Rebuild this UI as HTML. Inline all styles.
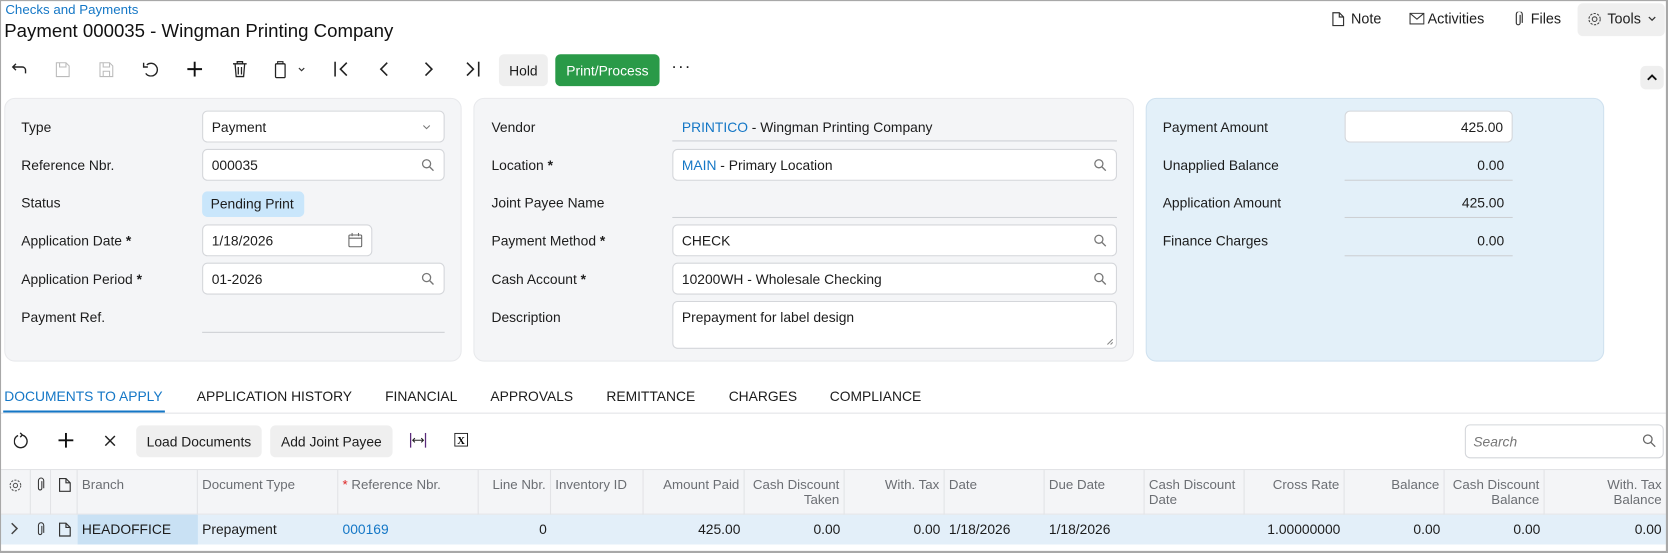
<!DOCTYPE html>
<html><head><meta charset="utf-8"><style>
*{box-sizing:border-box;margin:0;padding:0}
html,body{width:1668px;height:553px;overflow:hidden;background:#fff}
#w{position:absolute;left:0;top:0;width:1568px;height:520px;transform:scale(1.06378,1.06346);transform-origin:0 0;font-family:"Liberation Sans",Arial,sans-serif;font-size:13px;color:#1c1c1c}
.frame{position:absolute;left:0;top:0;width:1568px;height:520px;border:1px solid #a8a8a8;border-right:2px solid #a8a8a8;border-bottom:2px solid #a8a8a8;pointer-events:none}
.a{position:absolute;white-space:nowrap}
.panel{position:absolute;background:#f4f5f7;border:1px solid #e8e9ec;border-radius:10px}
.inp{position:absolute;background:#fff;border:1px solid #d4d6da;border-radius:5px;height:30px;padding:7px 8px}
.ul{position:absolute;border-bottom:1px solid #cdd0d4;height:1px}
.lbl{position:absolute;white-space:nowrap}
.btn{position:absolute;background:#efefef;border-radius:5px;height:30px;padding:8px 9px;font-size:13px}
.blue{color:#1477c6}
svg{position:absolute}
.th{position:absolute;top:441px;height:43px;border-right:1px solid #e2e3e6;color:#6b6e73;padding:8px 4px;line-height:14px;font-size:12.5px;white-space:normal}
.td{position:absolute;top:484px;height:28px;padding:6px 4px;font-size:13px}
.r{text-align:right}
</style></head><body><div id="w">
<div class="a blue" style="left:5px;top:2px;font-size:12.5px">Checks and Payments</div>
<div class="a" style="left:4px;top:19px;font-size:17.5px;color:#111">Payment 000035 - Wingman Printing Company</div>

<svg style="left:1252px;top:11px" width="12" height="14" viewBox="0 0 12 14"><path d="M1 1h6l4 4v8H1z M7 1v4h4" fill="none" stroke="#333" stroke-width="1.1"/></svg>
<div class="a" style="left:1270px;top:10px;font-size:13.5px">Note</div>
<svg style="left:1325px;top:12px" width="14" height="11" viewBox="0 0 14 11"><rect x="0.5" y="0.5" width="13" height="10" fill="none" stroke="#333"/><path d="M.5 .5l6.5 5.5 6.5-5.5" fill="none" stroke="#333"/></svg>
<div class="a" style="left:1342px;top:10px;font-size:13.5px">Activities</div>
<svg style="left:1423px;top:11px" width="9" height="14" viewBox="0 0 9 14"><path d="M6 3v7.5a1.8 1.8 0 01-3.6 0V2.5a2.8 2.8 0 015.6 0v8" fill="none" stroke="#333" stroke-width="1.1"/></svg>
<div class="a" style="left:1439px;top:10px;font-size:13.5px">Files</div>
<div class="a" style="left:1483px;top:3px;width:82px;height:31px;background:#efefef;border-radius:5px"></div>
<svg style="left:1492px;top:11px" width="14" height="14" viewBox="0 0 14 14"><circle cx="7" cy="7" r="2.2" fill="none" stroke="#444"/><circle cx="7" cy="7" r="5.3" fill="none" stroke="#444" stroke-dasharray="2.2 1.2"/></svg>
<div class="a" style="left:1511px;top:10px;font-size:13.5px">Tools</div>
<svg style="left:1549px;top:15px" width="8" height="6"><path d="M1 1l3 3 3-3" fill="none" stroke="#333" stroke-width="1.2"/></svg>
<div class="a" style="left:1542px;top:62px;width:22px;height:22px;background:#efefef;border-radius:5px"></div>
<svg style="left:1548px;top:69px" width="10" height="7"><path d="M1 6l4-4 4 4" fill="none" stroke="#111" stroke-width="1.8"/></svg>

<svg style="left:10px;top:58px" width="16" height="14" viewBox="0 0 16 14"><path d="M14 11V8a3 3 0 00-3-3H2M5 2L2 5l3 3" fill="none" stroke="#222" stroke-width="1.3"/></svg>
<svg style="left:52px;top:58px" width="14" height="15" viewBox="0 0 14 15"><path d="M1 1h9l3 3v10H1z" fill="none" stroke="#bbb"/><path d="M4 1v4h6V1" fill="none" stroke="#bbb"/></svg>
<svg style="left:93px;top:58px" width="14" height="15" viewBox="0 0 14 15"><path d="M1 1h9l3 3v10H1z" fill="none" stroke="#bbb"/><path d="M4 1v4h6V1M4 14V9h6v5" fill="none" stroke="#bbb"/></svg>
<svg style="left:134px;top:58px" width="16" height="14" viewBox="0 0 16 14"><path d="M4 3a6 6 0 11-1 8M1 1v4h4" fill="none" stroke="#222" stroke-width="1.3"/></svg>
<svg style="left:176px;top:58px" width="14" height="14"><path d="M7 0v14M0 7h14" stroke="#111" stroke-width="1.8"/></svg>
<svg style="left:219px;top:57px" width="13" height="16" viewBox="0 0 13 16"><path d="M0 3h13M4 3V1h5v2M2 3l1 12h7l1-12M5 6v7M8 6v7" fill="none" stroke="#222" stroke-width="1.2"/></svg>
<svg style="left:257px;top:57px" width="30" height="17" viewBox="0 0 30 17"><rect x="2" y="3" width="9" height="13" rx="1" fill="none" stroke="#222" stroke-width="1.2"/><path d="M4 3V1h5v2" fill="none" stroke="#222"/><path d="M24 7l2.5 2.5 2.5-2.5" fill="none" stroke="#333" stroke-width="1.1"/></svg>
<svg style="left:314px;top:58px" width="13" height="14"><path d="M1 0v14M12 1L6 7l6 6" fill="none" stroke="#222" stroke-width="1.5"/></svg>
<svg style="left:356px;top:58px" width="10" height="14"><path d="M8 1L2 7l6 6" fill="none" stroke="#222" stroke-width="1.5"/></svg>
<svg style="left:398px;top:58px" width="10" height="14"><path d="M2 1l6 6-6 6" fill="none" stroke="#222" stroke-width="1.5"/></svg>
<svg style="left:438px;top:58px" width="13" height="14"><path d="M12 0v14M1 1l6 6-6 6" fill="none" stroke="#222" stroke-width="1.5"/></svg>
<div class="btn" style="left:469px;top:51px;width:46px;text-align:center">Hold</div>
<div class="btn" style="left:522px;top:51px;width:98px;background:#2a9a48;color:#fff;text-align:center">Print/Process</div>
<div class="a" style="left:631px;top:54px;font-size:16px;letter-spacing:1px">···</div>

<div class="panel" style="left:4px;top:92px;width:430px;height:248px"></div>
<div class="lbl" style="left:20px;top:112px">Type</div>
<div class="inp" style="left:190px;top:104px;width:228px">Payment</div>
<svg style="left:397px;top:117px" width="8" height="5"><path d="M1 1l3 3 3-3" fill="none" stroke="#777"/></svg>
<div class="lbl" style="left:20px;top:148px">Reference Nbr.</div>
<div class="inp" style="left:190px;top:140px;width:228px">000035</div>
<div class="lbl" style="left:20px;top:183px">Status</div>
<div class="a" style="left:190px;top:180px;width:96px;height:24px;background:#c9e6fb;border-radius:5px;padding:4px 8px">Pending Print</div>
<div class="lbl" style="left:20px;top:219px">Application Date <b>*</b></div>
<div class="inp" style="left:190px;top:211px;width:160px">1/18/2026</div>
<svg style="left:327px;top:219px" width="14" height="14" viewBox="0 0 14 14"><rect x="1" y="2" width="12" height="11" rx="1" fill="none" stroke="#666"/><path d="M1 5h12M4 0v3M10 0v3" stroke="#666"/></svg>
<div class="lbl" style="left:20px;top:255px">Application Period <b>*</b></div>
<div class="inp" style="left:190px;top:247px;width:228px">01-2026</div>
<div class="lbl" style="left:20px;top:291px">Payment Ref.</div>
<div class="ul" style="left:190px;top:312px;width:228px"></div>

<div class="panel" style="left:445px;top:92px;width:621px;height:248px"></div>
<div class="lbl" style="left:462px;top:112px">Vendor</div>
<div class="lbl" style="left:641px;top:112px"><span class="blue">PRINTICO</span> - Wingman Printing Company</div>
<div class="ul" style="left:632px;top:132px;width:418px"></div>
<div class="lbl" style="left:462px;top:148px">Location <b>*</b></div>
<div class="inp" style="left:632px;top:140px;width:418px"><span class="blue">MAIN</span> - Primary Location</div>
<div class="lbl" style="left:462px;top:183px">Joint Payee Name</div>
<div class="ul" style="left:632px;top:204px;width:418px"></div>
<div class="lbl" style="left:462px;top:219px">Payment Method <b>*</b></div>
<div class="inp" style="left:632px;top:211px;width:418px">CHECK</div>
<div class="lbl" style="left:462px;top:255px">Cash Account <b>*</b></div>
<div class="inp" style="left:632px;top:247px;width:418px">10200WH - Wholesale Checking</div>
<div class="lbl" style="left:462px;top:291px">Description</div>
<div class="inp" style="left:632px;top:283px;width:418px;height:45px">Prepayment for label design</div>

<div class="panel" style="left:1077px;top:92px;width:431px;height:248px;background:#e3f0f9;border-color:#cfe1ef"></div>
<div class="lbl" style="left:1093px;top:112px">Payment Amount</div>
<div class="inp r" style="left:1264px;top:104px;width:158px">425.00</div>
<div class="lbl" style="left:1093px;top:148px">Unapplied Balance</div>
<div class="lbl" style="left:1264px;top:148px;width:150px;text-align:right">0.00</div>
<div class="ul" style="left:1264px;top:169px;width:158px"></div>
<div class="lbl" style="left:1093px;top:183px">Application Amount</div>
<div class="lbl" style="left:1264px;top:183px;width:150px;text-align:right">425.00</div>
<div class="ul" style="left:1264px;top:204px;width:158px"></div>
<div class="lbl" style="left:1093px;top:219px">Finance Charges</div>
<div class="lbl" style="left:1264px;top:219px;width:150px;text-align:right">0.00</div>
<div class="ul" style="left:1264px;top:240px;width:158px"></div>

<div class="a blue" style="left:4px;top:365px">DOCUMENTS TO APPLY</div>
<div class="a" style="left:3px;top:386px;width:152px;height:2px;background:#1477c6"></div>
<div class="a" style="left:185px;top:365px">APPLICATION HISTORY</div>
<div class="a" style="left:362px;top:365px">FINANCIAL</div>
<div class="a" style="left:461px;top:365px">APPROVALS</div>
<div class="a" style="left:570px;top:365px">REMITTANCE</div>
<div class="a" style="left:685px;top:365px">CHARGES</div>
<div class="a" style="left:780px;top:365px">COMPLIANCE</div>
<div class="a" style="left:0;top:388px;width:1566px;height:1px;background:#e2e3e6"></div>

<svg style="left:13px;top:406px" width="14" height="16" viewBox="0 0 14 16"><path d="M4 3.5A6 6 0 107 3h1M6 1l2 2-2 2" fill="none" stroke="#222" stroke-width="1.3"/></svg>
<svg style="left:55px;top:407px" width="14" height="14"><path d="M7 0v14M0 7h14" stroke="#111" stroke-width="1.8"/></svg>
<svg style="left:98px;top:409px" width="11" height="11"><path d="M1 1l9 9M10 1l-9 9" stroke="#222" stroke-width="1.4"/></svg>
<div class="btn" style="left:128px;top:400px;width:118px;text-align:center">Load Documents</div>
<div class="btn" style="left:254px;top:400px;width:115px;text-align:center">Add Joint Payee</div>
<svg style="left:385px;top:407px" width="16" height="14"><path d="M1 0v14M15 0v14" stroke="#5a2a7a" stroke-width="1.2"/><path d="M3 7h10M5 5l-2 2 2 2M11 5l2 2-2 2" fill="none" stroke="#222"/></svg>
<svg style="left:427px;top:407px" width="13" height="13"><rect x=".5" y=".5" width="12" height="12" fill="#fff" stroke="#222"/><text x="6.5" y="10.5" font-size="10" font-weight="bold" text-anchor="middle" font-family="Liberation Serif">X</text></svg>
<div class="inp" style="left:1377px;top:399px;width:187px;height:32px;padding:8px 7px;color:#777;font-style:italic">Search</div>
<svg style="left:1544px;top:408px" width="13" height="13"><circle cx="5" cy="5" r="4" fill="none" stroke="#666" stroke-width="1.2"/><path d="M8 8l4 4" stroke="#666" stroke-width="1.2"/></svg>

<div class="a" style="left:1px;top:441px;width:1565px;height:43px;background:#f4f5f7;border-top:1px solid #e2e3e6;border-bottom:1px solid #e2e3e6"></div>
<div class="a" style="left:1px;top:484px;width:1565px;height:28px;background:#e3eff9"></div>
<div class="a" style="left:73px;top:484px;width:113px;height:28px;background:#c9e1f4"></div>
<div class="th" style="left:1px;width:28px"></div>
<div class="th" style="left:29px;width:19px"></div>
<div class="th" style="left:48px;width:25px"></div>
<div class="th" style="left:73px;width:113px">Branch</div>
<div class="th" style="left:186px;width:132px">Document Type</div>
<div class="th" style="left:318px;width:132px"><span style="color:#d22">*</span> Reference Nbr.</div>
<div class="th r" style="left:450px;width:68px">Line Nbr.</div>
<div class="th" style="left:518px;width:87px">Inventory ID</div>
<div class="th r" style="left:605px;width:95px">Amount Paid</div>
<div class="th r" style="left:700px;width:94px">Cash Discount Taken</div>
<div class="th r" style="left:794px;width:94px">With. Tax</div>
<div class="th" style="left:888px;width:94px">Date</div>
<div class="th" style="left:982px;width:94px">Due Date</div>
<div class="th" style="left:1076px;width:94px">Cash Discount Date</div>
<div class="th r" style="left:1170px;width:94px">Cross Rate</div>
<div class="th r" style="left:1264px;width:94px">Balance</div>
<div class="th r" style="left:1358px;width:94px">Cash Discount Balance</div>
<div class="th r" style="left:1452px;width:114px;border:none;padding-left:40px">With. Tax Balance</div>
<svg style="left:8px;top:450px" width="13" height="13"><circle cx="6.5" cy="6.5" r="2" fill="none" stroke="#555"/><circle cx="6.5" cy="6.5" r="5" fill="none" stroke="#555" stroke-dasharray="2 1.2"/></svg>
<svg style="left:34px;top:449px" width="8" height="14" viewBox="0 0 9 14"><path d="M6 3v7.5a1.8 1.8 0 01-3.6 0V2.5a2.8 2.8 0 015.6 0v8" fill="none" stroke="#333" stroke-width="1.1"/></svg>
<svg style="left:55px;top:449px" width="12" height="14" viewBox="0 0 12 14"><path d="M1 1h6l4 4v8H1z M7 1v4h4" fill="none" stroke="#333" stroke-width="1.1"/></svg>
<svg style="left:10px;top:491px" width="7" height="12"><path d="M1 1l5 5-5 5" fill="none" stroke="#444" stroke-width="1.4"/></svg>
<svg style="left:34px;top:491px" width="8" height="14" viewBox="0 0 9 14"><path d="M6 3v7.5a1.8 1.8 0 01-3.6 0V2.5a2.8 2.8 0 015.6 0v8" fill="none" stroke="#333" stroke-width="1.1"/></svg>
<svg style="left:55px;top:491px" width="12" height="14" viewBox="0 0 12 14"><path d="M1 1h6l4 4v8H1z M7 1v4h4" fill="none" stroke="#333" stroke-width="1.1"/></svg>
<div class="td" style="left:73px;width:113px">HEADOFFICE</div>
<div class="td" style="left:186px">Prepayment</div>
<div class="td blue" style="left:318px">000169</div>
<div class="td r" style="left:450px;width:68px">0</div>
<div class="td r" style="left:605px;width:95px">425.00</div>
<div class="td r" style="left:700px;width:94px">0.00</div>
<div class="td r" style="left:794px;width:94px">0.00</div>
<div class="td" style="left:888px">1/18/2026</div>
<div class="td" style="left:982px">1/18/2026</div>
<div class="td r" style="left:1170px;width:94px">1.00000000</div>
<div class="td r" style="left:1264px;width:94px">0.00</div>
<div class="td r" style="left:1358px;width:94px">0.00</div>
<div class="td r" style="left:1452px;width:114px">0.00</div>

<svg style="left:396px;top:149px" width="12" height="12"><circle cx="5" cy="5" r="3.8" fill="none" stroke="#777" stroke-width="1.2"/><path d="M8 8l3.5 3.5" stroke="#777" stroke-width="1.3"/></svg>
<svg style="left:396px;top:256px" width="12" height="12"><circle cx="5" cy="5" r="3.8" fill="none" stroke="#777" stroke-width="1.2"/><path d="M8 8l3.5 3.5" stroke="#777" stroke-width="1.3"/></svg>
<svg style="left:1028px;top:149px" width="12" height="12"><circle cx="5" cy="5" r="3.8" fill="none" stroke="#777" stroke-width="1.2"/><path d="M8 8l3.5 3.5" stroke="#777" stroke-width="1.3"/></svg>
<svg style="left:1028px;top:220px" width="12" height="12"><circle cx="5" cy="5" r="3.8" fill="none" stroke="#777" stroke-width="1.2"/><path d="M8 8l3.5 3.5" stroke="#777" stroke-width="1.3"/></svg>
<svg style="left:1028px;top:256px" width="12" height="12"><circle cx="5" cy="5" r="3.8" fill="none" stroke="#777" stroke-width="1.2"/><path d="M8 8l3.5 3.5" stroke="#777" stroke-width="1.3"/></svg>
<svg style="left:1040px;top:318px" width="7" height="7"><path d="M6 1L1 6M6 4L4 6" stroke="#888"/></svg>

<div class="frame"></div>
</div></body></html>
